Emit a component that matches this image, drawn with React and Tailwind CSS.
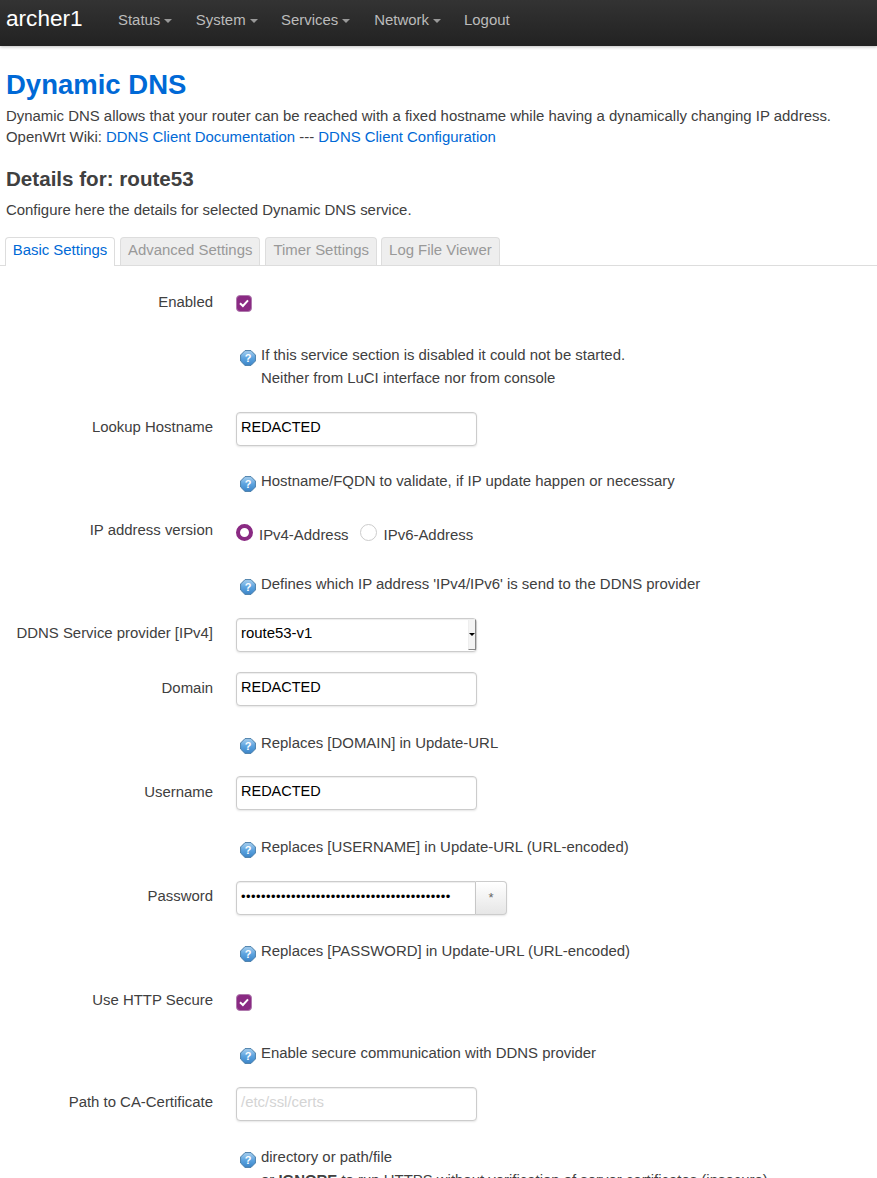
import React from "react";

const Help = () => (
  <svg width="16" height="16" viewBox="0 0 16 16" className="absolute left-[4px] top-[7px]">
    <defs>
      <linearGradient id="h" x1="0" y1="0" x2="0" y2="1">
        <stop offset="0" stopColor="#a9d0ef" />
        <stop offset="0.5" stopColor="#5da4e0" />
        <stop offset="1" stopColor="#3c85c8" />
      </linearGradient>
    </defs>
    <path d="M5 .6h6L15.4 5v6L11 15.4H5L.6 11V5z" fill="url(#h)" stroke="#4a7ea8" strokeWidth="1" strokeLinejoin="round" />
    <text x="8" y="12" textAnchor="middle" fontSize="11" fontWeight="700" fill="#fff" fontFamily="Liberation Sans">?</text>
  </svg>
);

const Hint = ({ children, className = "mt-[23px] mb-[23px]" }) => (
  <div className={`relative ml-[236px] pl-[25px] leading-[23px] ${className}`}>
    <Help />
    {children}
  </div>
);

const Row = ({ label, children, labelClass = "-mt-[4px]" }) => (
  <div className="flex h-[34px] items-center">
    <div className={`w-[213px] shrink-0 text-right ${labelClass}`}>{label}</div>
    <div className="ml-[23px] flex items-center">{children}</div>
  </div>
);

const Check = () => (
  <span className="flex h-[17px] w-4 items-center justify-center rounded-[4px] border border-[#b07aae] bg-[#8a2a83]">
    <svg width="12" height="12" viewBox="0 0 12 12" fill="none">
      <path d="M2 6.2 4.9 9 10 3.4" stroke="#fff" strokeWidth="2" />
    </svg>
  </span>
);

const Field = ({ children, className = "w-[241px] rounded-[4px]" }) => (
  <div className={`flex h-[34px] items-center border border-[#ccc] bg-white pl-[4px] shadow-[inset_0_1px_1px_rgba(0,0,0,0.075),0_1px_2px_rgba(0,0,0,0.1)] ${className}`}>
    {children}
  </div>
);

const Redacted = () => <span className="-mt-[2px] text-[14.5px] text-black">REDACTED</span>;

const Caret = () => (
  <span className="ml-1 inline-block h-0 w-0 align-middle border-x-[4px] border-t-[4px] border-x-transparent border-t-[#999]" />
);

const Tab = ({ children, className = "mr-[5px]" }) => (
  <div className={`flex h-[28px] items-center rounded-t-[4px] border border-b-0 border-[#ddd] bg-[#eee] px-[7px] pb-[2px] text-[#999] ${className}`}>
    {children}
  </div>
);

export default function App() {
  return (
    <div className="h-[1178px] overflow-hidden bg-white font-['Liberation_Sans',Arial,sans-serif] text-[14.93px] text-[#404040]">
      <nav className="flex h-[46px] items-center bg-gradient-to-b from-[#333333] to-[#222222] shadow-[0_1px_3px_rgba(0,0,0,0.25)]">
        <div className="ml-[6px] -mt-[8px] w-[112px] text-[22.6px] leading-none text-white">archer1</div>
        <div className="flex -mt-[6px] text-[#bbbbbb]">
          <span className="mr-[23.5px]">Status<Caret /></span>
          <span className="mr-[23.5px]">System<Caret /></span>
          <span className="mr-[24px]">Services<Caret /></span>
          <span className="mr-[23px]">Network<Caret /></span>
          <span>Logout</span>
        </div>
      </nav>

      <main>
        <div className="mx-[6px] mt-[24px]">
          <h1 className="text-[27.5px] font-bold leading-[30px] text-[#0069d6]">Dynamic DNS</h1>
          <p className="mt-[5px] leading-[21px]">
            Dynamic DNS allows that your router can be reached with a fixed hostname while having a dynamically changing IP address.
            <br />
            OpenWrt Wiki: <a className="text-[#0069d6]">DDNS Client Documentation</a> --- <a className="text-[#0069d6]">DDNS Client Configuration</a>
          </p>
          <h2 className="mt-[20px] text-[20.6px] font-bold leading-[24px]">Details for: route53</h2>
          <p className="mt-[9px] leading-[20px]">Configure here the details for selected Dynamic DNS service.</p>
        </div>

        <div className="mt-[17px] flex h-[29px] items-end border-b border-[#ddd] pl-[5px]">
          <div className="mr-[5px] -mb-px flex h-[29px] w-[110px] items-center justify-center rounded-t-[4px] border border-b-0 border-[#ddd] bg-white pb-[4px] text-[#0069d6]">Basic Settings</div>
          <Tab>Advanced Settings</Tab>
          <Tab className="mr-[4px]">Timer Settings</Tab>
          <Tab>Log File Viewer</Tab>
        </div>

        <div className="mt-5">
          <Row label="Enabled" labelClass="-mt-[2px]"><Check /></Row>
          <Hint>If this service section is disabled it could not be started.<br />Neither from LuCI interface nor from console</Hint>

          <Row label="Lookup Hostname"><Field><Redacted /></Field></Row>
          <Hint>Hostname/FQDN to validate, if IP update happen or necessary</Hint>

          <Row label="IP address version">
            <span className="h-[17px] w-[17px] rounded-full border-[4px] border-[#8a2a83] bg-white" />
            <span className="ml-[6px] mt-[6px]">IPv4-Address</span>
            <span className="ml-[11px] h-[17px] w-[17px] rounded-full border border-[#ccc] bg-white" />
            <span className="ml-[7px] mt-[6px]">IPv6-Address</span>
          </Row>
          <Hint>Defines which IP address 'IPv4/IPv6' is send to the DDNS provider</Hint>

          <Row label="DDNS Service provider [IPv4]">
            <Field className="relative w-[241px] rounded-[4px]">
              <span className="-mt-[4px] text-black">route53-v1</span>
              <span className="absolute right-0 top-0 flex h-[31px] w-[8px] items-center justify-center border border-[#888] border-l-[#eee] border-t-[#eee] bg-[#f4f4f4]">
                <span className="h-0 w-0 border-x-[3px] border-t-[3px] border-x-transparent border-t-black" />
              </span>
            </Field>
          </Row>
          <div className="h-5" />

          <Row label="Domain" labelClass="-mt-[2px]"><Field><Redacted /></Field></Row>
          <Hint className="mt-[25px] mb-[22px]">Replaces [DOMAIN] in Update-URL</Hint>

          <Row label="Username" labelClass="-mt-[2px]"><Field><Redacted /></Field></Row>
          <Hint className="mt-[25px] mb-[23px]">Replaces [USERNAME] in Update-URL (URL-encoded)</Hint>

          <Row label="Password">
            <Field className="w-[240px] rounded-l-[4px]">
              <span className="-mt-[2px] text-[13px] tracking-[0.44px] text-black">••••••••••••••••••••••••••••••••••••••••••</span>
            </Field>
            <div className="flex h-[34px] w-[31px] items-center justify-center rounded-r-[4px] border border-l-0 border-[#ccc] bg-gradient-to-b from-white to-[#e6e6e6] text-[13px] text-[#666] shadow-[0_1px_2px_rgba(0,0,0,0.1)]">*</div>
          </Row>
          <Hint className="mt-[24px] mb-[23px]">Replaces [PASSWORD] in Update-URL (URL-encoded)</Hint>

          <Row label="Use HTTP Secure"><Check /></Row>
          <Hint className="mt-[22px] mb-[23px]">Enable secure communication with DDNS provider</Hint>

          <Row label="Path to CA-Certificate">
            <Field><span className="-mt-[4px] text-[#d4d4d4]">/etc/ssl/certs</span></Field>
          </Row>
          <Hint className="mt-[24px] mb-[23px]">directory or path/file<br />or <b>IGNORE</b> to run HTTPS without verification of server certificates (insecure)</Hint>
        </div>
      </main>
    </div>
  );
}
